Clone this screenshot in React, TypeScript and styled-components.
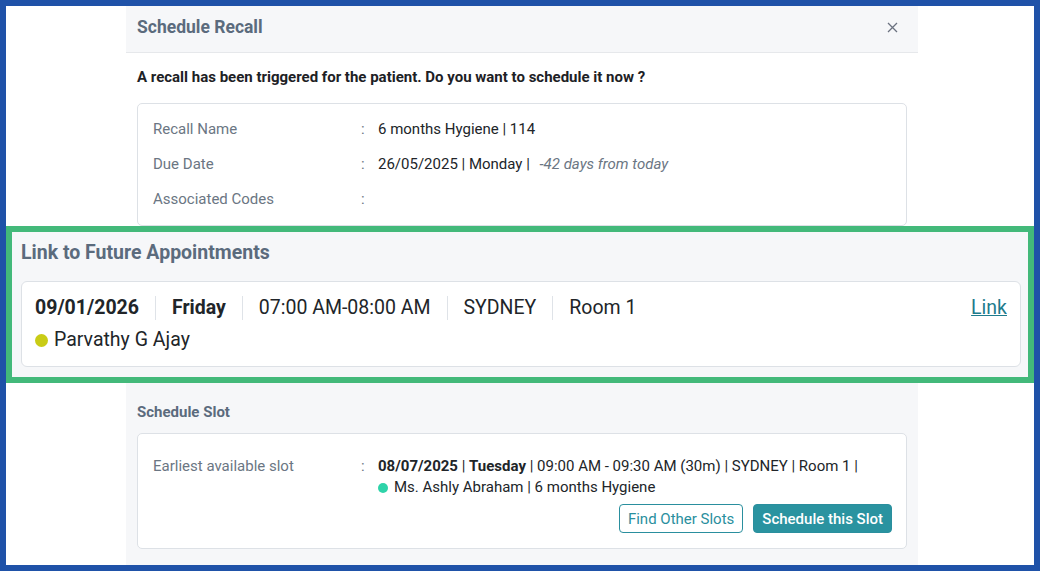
import React from "react";
import styled, { createGlobalStyle } from "styled-components";

const Global = createGlobalStyle`
  html, body { margin: 0; padding: 0; background: #ffffff; }
  body { font-family: Roboto, "Liberation Sans", Arial, sans-serif; color: #212529; }
  * { box-sizing: border-box; }
`;

const Frame = styled.div`
  width: 1040px;
  height: 571px;
  border: 6px solid #1f52a8;
  background: #ffffff;
  display: flex;
  flex-direction: column;
  overflow: hidden;
`;

const ModalTop = styled.div`
  margin-left: 120px;
  width: 792px;
  height: 220px;
  display: flex;
  flex-direction: column;
  background: #ffffff;
`;

const Header = styled.div`
  height: 47px;
  flex-shrink: 0;
  background: #f6f7f9;
  border-bottom: 1px solid #e6e8eb;
  display: flex;
  align-items: center;
  justify-content: space-between;
  padding: 0 19px 4px 11px;
`;

const Title = styled.h2`
  margin: 0;
  font-size: 17.5px;
  font-weight: 700;
  color: #5b6b7d;
`;

const CloseBtn = styled.button`
  border: 0;
  background: transparent;
  padding: 0;
  width: 14px;
  height: 14px;
  display: flex;
  align-items: center;
  justify-content: center;
  cursor: pointer;
`;

const Body = styled.div`
  padding: 14px 11px 0 11px;
`;

const Message = styled.p`
  margin: 0 0 16px 0;
  font-size: 15px;
  line-height: 20px;
  font-weight: 700;
  color: #1d2125;
`;

const InfoCard = styled.div<{ $pad: string }>`
  border: 1px solid #dde1e6;
  border-radius: 5px;
  background: #ffffff;
  padding: ${(p) => p.$pad};
`;

const InfoRow = styled.div`
  display: grid;
  grid-template-columns: 208px 17px 1fr;
  font-size: 15px;
  line-height: 21px;
  & + & { margin-top: 14px; }
`;

const Label = styled.span`
  color: #6b7683;
`;

const Colon = styled.span`
  color: #6b7683;
`;

const Value = styled.span`
  color: #212529;
`;

const Muted = styled.span`
  color: #6b7683;
  font-style: italic;
  margin-left: 6px;
`;

const Highlight = styled.section`
  border: 6px solid #43b97a;
  background: #f6f7f9;
  height: 157px;
  flex-shrink: 0;
  padding: 9px 7px 0 9px;
`;

const HighlightTitle = styled.h3`
  margin: 0 0 16px 0;
  font-size: 19.5px;
  line-height: 24px;
  font-weight: 700;
  color: #5b6b7d;
`;

const ApptCard = styled.div`
  background: #ffffff;
  border: 1px solid #dde1e6;
  border-radius: 6px;
  height: 86px;
  padding: 13px 13px 0 13px;
  display: flex;
  flex-direction: column;
`;

const ApptLine = styled.div`
  display: flex;
  align-items: center;
  font-size: 19.5px;
  line-height: 26px;
  color: #212529;
`;

const ApptItem = styled.span<{ $bold?: boolean }>`
  font-weight: ${(p) => (p.$bold ? 700 : 400)};
  padding: 0 16px;
  border-left: 1px solid #dfe3e8;
  line-height: 24px;
  &:first-child { padding-left: 0; border-left: 0; }
`;

const LinkText = styled.a`
  margin-left: auto;
  color: #1e7b8c;
  text-decoration: underline;
  font-size: 19.5px;
  cursor: pointer;
`;

const Dot = styled.span<{ $color: string; $size: number }>`
  display: inline-block;
  width: ${(p) => p.$size}px;
  height: ${(p) => p.$size}px;
  border-radius: 50%;
  background: ${(p) => p.$color};
  margin-right: 6px;
  flex-shrink: 0;
`;

const PatientLine = styled.div`
  display: flex;
  align-items: center;
  font-size: 19.5px;
  line-height: 26px;
  margin-top: 6px;
  color: #212529;
`;

const ModalBottom = styled.div`
  margin-left: 120px;
  width: 792px;
  flex: 1;
  background: #f6f7f9;
  padding: 20px 11px 0 11px;
`;

const SectionTitle = styled.h4`
  margin: 0 0 12px 0;
  font-size: 15px;
  line-height: 18px;
  font-weight: 700;
  color: #5b6b7d;
`;

const SlotValue = styled.div`
  color: #212529;
  font-size: 15px;
  line-height: 21px;
  b { font-weight: 700; }
`;

const SlotLine2 = styled.div`
  display: flex;
  align-items: center;
`;

const Actions = styled.div`
  display: flex;
  justify-content: flex-end;
  gap: 10px;
  margin-top: 6px;
`;

const Button = styled.button<{ $primary?: boolean }>`
  height: 29px;
  padding: 0 8px;
  border-radius: 4px;
  font-family: Roboto, "Liberation Sans", Arial, sans-serif;
  font-size: 15px;
  font-weight: ${(p) => (p.$primary ? 500 : 400)};
  border: 1px solid #2a8f9e;
  background: ${(p) => (p.$primary ? "#2a93a0" : "#ffffff")};
  color: ${(p) => (p.$primary ? "#ffffff" : "#2a8f9e")};
  cursor: pointer;
`;

export default function App() {
  return (
    <>
      <Global />
      <Frame>
        <ModalTop>
          <Header>
            <Title>Schedule Recall</Title>
            <CloseBtn aria-label="Close">
              <svg width="11" height="11" viewBox="0 0 11 11">
                <path d="M1 1L10 10M10 1L1 10" stroke="#6b7280" strokeWidth="1.3" />
              </svg>
            </CloseBtn>
          </Header>
          <Body>
            <Message>A recall has been triggered for the patient. Do you want to schedule it now ?</Message>
            <InfoCard $pad="15px 15px 15px 15px">
              <InfoRow>
                <Label>Recall Name</Label>
                <Colon>:</Colon>
                <Value>6 months Hygiene | 114</Value>
              </InfoRow>
              <InfoRow>
                <Label>Due Date</Label>
                <Colon>:</Colon>
                <Value>
                  26/05/2025 | Monday | <Muted>-42 days from today</Muted>
                </Value>
              </InfoRow>
              <InfoRow>
                <Label>Associated Codes</Label>
                <Colon>:</Colon>
                <Value></Value>
              </InfoRow>
            </InfoCard>
          </Body>
        </ModalTop>

        <Highlight>
          <HighlightTitle>Link to Future Appointments</HighlightTitle>
          <ApptCard>
            <ApptLine>
              <ApptItem $bold>09/01/2026</ApptItem>
              <ApptItem $bold>Friday</ApptItem>
              <ApptItem>07:00 AM-08:00 AM</ApptItem>
              <ApptItem>SYDNEY</ApptItem>
              <ApptItem>Room 1</ApptItem>
              <LinkText>Link</LinkText>
            </ApptLine>
            <PatientLine>
              <Dot $color="#c9cc16" $size={13} />
              Parvathy G Ajay
            </PatientLine>
          </ApptCard>
        </Highlight>

        <ModalBottom>
          <SectionTitle>Schedule Slot</SectionTitle>
          <InfoCard $pad="22px 14px 15px 15px">
            <InfoRow>
              <Label>Earliest available slot</Label>
              <Colon>:</Colon>
              <SlotValue>
                <div>
                  <b>08/07/2025</b> | <b>Tuesday</b> | 09:00 AM - 09:30 AM (30m) | SYDNEY | Room 1 |
                </div>
                <SlotLine2>
                  <Dot $color="#2ed3a9" $size={10} />
                  Ms. Ashly Abraham | 6 months Hygiene
                </SlotLine2>
              </SlotValue>
            </InfoRow>
            <Actions>
              <Button>Find Other Slots</Button>
              <Button $primary>Schedule this Slot</Button>
            </Actions>
          </InfoCard>
        </ModalBottom>
      </Frame>
    </>
  );
}
